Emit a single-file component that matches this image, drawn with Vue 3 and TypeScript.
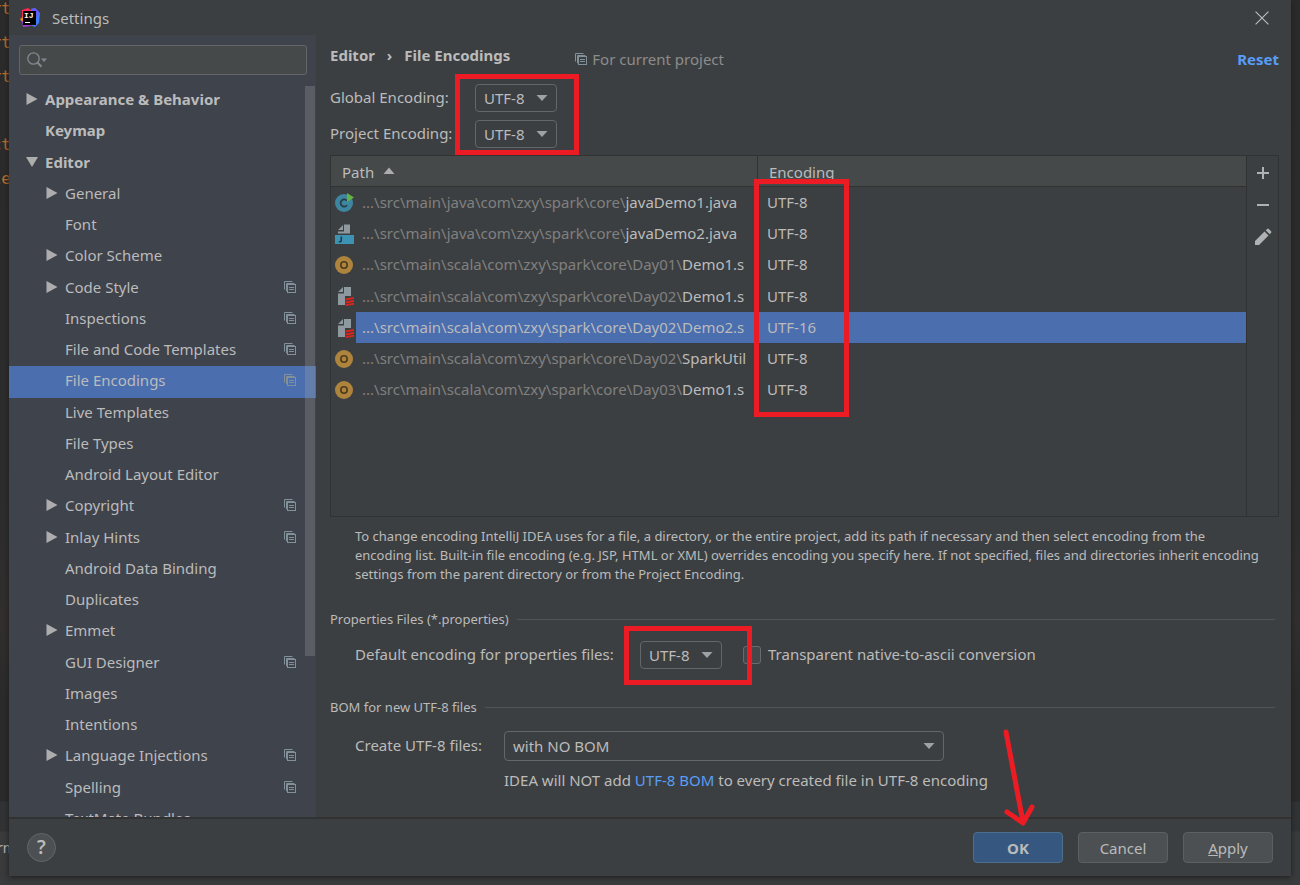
<script setup lang="ts">
import { ref } from 'vue'

interface TreeItem {
  label: string
  level: 0 | 1
  arrow?: 'right' | 'down'
  project?: boolean
}

type IconKind = 'class' | 'java' | 'object' | 'scala'

interface FileRow {
  icon: IconKind
  dir: string
  name: string
  encoding: string
}

const tree: TreeItem[] = [
  { label: 'Appearance & Behavior', level: 0, arrow: 'right' },
  { label: 'Keymap', level: 0 },
  { label: 'Editor', level: 0, arrow: 'down' },
  { label: 'General', level: 1, arrow: 'right' },
  { label: 'Font', level: 1 },
  { label: 'Color Scheme', level: 1, arrow: 'right' },
  { label: 'Code Style', level: 1, arrow: 'right', project: true },
  { label: 'Inspections', level: 1, project: true },
  { label: 'File and Code Templates', level: 1, project: true },
  { label: 'File Encodings', level: 1, project: true },
  { label: 'Live Templates', level: 1 },
  { label: 'File Types', level: 1 },
  { label: 'Android Layout Editor', level: 1 },
  { label: 'Copyright', level: 1, arrow: 'right', project: true },
  { label: 'Inlay Hints', level: 1, arrow: 'right', project: true },
  { label: 'Android Data Binding', level: 1 },
  { label: 'Duplicates', level: 1 },
  { label: 'Emmet', level: 1, arrow: 'right' },
  { label: 'GUI Designer', level: 1, project: true },
  { label: 'Images', level: 1 },
  { label: 'Intentions', level: 1 },
  { label: 'Language Injections', level: 1, arrow: 'right', project: true },
  { label: 'Spelling', level: 1, project: true },
  { label: 'TextMate Bundles', level: 1 },
]

const files: FileRow[] = [
  { icon: 'class', dir: '...\\src\\main\\java\\com\\zxy\\spark\\core\\', name: 'javaDemo1.java', encoding: 'UTF-8' },
  { icon: 'java', dir: '...\\src\\main\\java\\com\\zxy\\spark\\core\\', name: 'javaDemo2.java', encoding: 'UTF-8' },
  { icon: 'object', dir: '...\\src\\main\\scala\\com\\zxy\\spark\\core\\Day01\\', name: 'Demo1.s', encoding: 'UTF-8' },
  { icon: 'scala', dir: '...\\src\\main\\scala\\com\\zxy\\spark\\core\\Day02\\', name: 'Demo1.s', encoding: 'UTF-8' },
  { icon: 'scala', dir: '...\\src\\main\\scala\\com\\zxy\\spark\\core\\Day02\\', name: 'Demo2.s', encoding: 'UTF-16' },
  { icon: 'object', dir: '...\\src\\main\\scala\\com\\zxy\\spark\\core\\Day02\\', name: 'SparkUtil', encoding: 'UTF-8' },
  { icon: 'object', dir: '...\\src\\main\\scala\\com\\zxy\\spark\\core\\Day03\\', name: 'Demo1.s', encoding: 'UTF-8' },
]

const current = ref('File Encodings')
const selectedRow = ref(4)
const query = ref('')
const globalEncoding = ref('UTF-8')
const projectEncoding = ref('UTF-8')
const propertiesEncoding = ref('UTF-8')
const bom = ref('with NO BOM')
const nativeToAscii = ref(false)
</script>

<template>
  <div class="desktop">
    <div class="code-behind" aria-hidden="true">
      <div>rt</div>
      <div>rt</div>
      <div>rt</div>
      <div>&nbsp;</div>
      <div>ct</div>
      <div>le</div>
    </div>
    <div class="tool-behind" aria-hidden="true">rm</div>

    <section class="dialog" aria-label="Settings">
      <header class="titlebar">
        <svg class="logo" viewBox="0 0 20 20" aria-hidden="true">
          <path d="M2 2 L8 0 L12 3 L9 10 L2 9 Z" fill="#fe2857" />
          <path d="M0 11 L4 8 L6 14 L2 14 Z" fill="#fc801d" />
          <path d="M11 1 L15 0 L20 5 L19 15 L15 19 L10 17 Z" fill="#3d7bf7" />
          <path d="M11 1 L15 0 L19 4 L17 9 L12 5 Z" fill="#6b57ff" />
          <path d="M2 13 L9 14 L11 18 L3 19 Z" fill="#a23be0" />
          <rect x="3" y="3" width="13" height="14" fill="#000" />
          <text x="4" y="10" font-size="8" font-weight="700" font-family="Liberation Mono, monospace" fill="#fff">IJ</text>
          <rect x="5" y="14" width="5" height="1" fill="#fff" />
        </svg>
        <h1>Settings</h1>
        <button class="close" type="button" aria-label="Close">
          <svg viewBox="0 0 12 12"><path d="M0.5 0.5 L11.5 11.5 M11.5 0.5 L0.5 11.5" /></svg>
        </button>
      </header>

      <div class="body">
        <aside class="sidebar">
          <div class="search">
            <svg viewBox="0 0 20 16" aria-hidden="true">
              <circle cx="6.5" cy="6.5" r="5.7" fill="none" stroke="#7f898e" stroke-width="1.3" />
              <path d="M10.5 10.5 L14.5 14.7" stroke="#7f898e" stroke-width="2" />
              <path d="M14 6.5 h6 l-3 3.5 z" fill="#7f898e" />
            </svg>
            <input v-model="query" type="text" aria-label="Search settings" />
          </div>
          <div class="tree-view">
            <ul class="tree">
              <li
                v-for="item in tree"
                :key="item.label"
                :class="{ child: item.level === 1, current: item.label === current }"
                @click="current = item.label"
              >
                <span class="twisty">
                  <svg v-if="item.arrow === 'right'" viewBox="0 0 12 12"><path d="M0.5 0 L11.5 6 L0.5 12 Z" /></svg>
                  <svg v-else-if="item.arrow === 'down'" viewBox="0 0 12 12"><path d="M0 1 H12 L6 11 Z" /></svg>
                </span>
                <span class="label">{{ item.label }}</span>
                <svg v-if="item.project" class="project-icon" viewBox="0 0 12 12" aria-hidden="true">
                  <path d="M0.5 8.5 V0.5 H8.5 M3 10 H2.5 V2.5 H10.5" />
                  <rect x="3.5" y="3.5" width="8" height="8" />
                  <path d="M5 6.5 H10 M5 8.5 H10" />
                </svg>
              </li>
            </ul>
            <div class="scrollbar"></div>
          </div>
        </aside>

        <main class="content">
          <div class="heading">
            <h2>Editor <span class="sep">›</span> File Encodings</h2>
            <p class="scope">
              <svg class="project-icon" viewBox="0 0 12 12" aria-hidden="true">
                <path d="M0.5 8.5 V0.5 H8.5 M3 10 H2.5 V2.5 H10.5" />
                <rect x="3.5" y="3.5" width="8" height="8" />
                <path d="M5 6.5 H10 M5 8.5 H10" />
              </svg>
              For current project
            </p>
            <a class="reset" href="#">Reset</a>
          </div>

          <div class="encodings">
            <label for="global">Global Encoding:</label>
            <div class="combo">
              <select id="global" v-model="globalEncoding"><option>UTF-8</option><option>UTF-16</option></select>
              <svg viewBox="0 0 12 8"><path d="M0.5 1 H11.5 L6 7 Z" /></svg>
            </div>
            <label for="project">Project Encoding:</label>
            <div class="combo">
              <select id="project" v-model="projectEncoding"><option>UTF-8</option><option>UTF-16</option></select>
              <svg viewBox="0 0 12 8"><path d="M0.5 1 H11.5 L6 7 Z" /></svg>
            </div>
            <div class="mark mark-top"></div>
          </div>

          <div class="panel">
            <div class="grid-wrap">
              <table>
                <colgroup><col class="col-path" /><col /></colgroup>
                <thead>
                  <tr>
                    <th scope="col">
                      Path
                      <svg class="sort" viewBox="0 0 12 7" aria-hidden="true"><path d="M0.5 7 L6 0.5 L11.5 7 Z" /></svg>
                    </th>
                    <th scope="col">Encoding</th>
                  </tr>
                </thead>
                <tbody>
                  <tr
                    v-for="(file, i) in files"
                    :key="i"
                    :class="{ selected: i === selectedRow }"
                    @click="selectedRow = i"
                  >
                    <td>
                      <div class="path-cell">
                        <svg class="file-icon" viewBox="0 0 20 20" aria-hidden="true">
                          <template v-if="file.icon === 'class'">
                            <circle cx="9" cy="10" r="9" fill="#3e86a0" />
                            <path d="M12 7.8 A3.6 3.6 0 1 0 12 12.2" fill="none" stroke="#263c46" stroke-width="1.7" />
                            <path d="M12 0 L19 4.5 L12 9 Z" fill="#62b543" />
                          </template>
                          <template v-else-if="file.icon === 'java'">
                            <path d="M3 6 L8 1 V6 Z M9 0.5 H15 V9.5 H3 V7.5 H9 Z" fill="#8e999f" />
                            <rect x="0" y="11" width="19" height="9" fill="#3c93b3" />
                            <path d="M6.3 12.5 V16.3 Q6.3 18 3.8 17.8" fill="none" stroke="#203a45" stroke-width="1.6" />
                          </template>
                          <template v-else-if="file.icon === 'object'">
                            <circle cx="9" cy="10" r="9" fill="#ae843d" />
                            <circle cx="9" cy="10" r="3.2" fill="none" stroke="#4d3b20" stroke-width="1.6" />
                          </template>
                          <template v-else>
                            <path d="M3 6 L8 1 V6 Z M9 1 H16 V10 H10 V19 H3 V7.5 H9 Z" fill="#8e999f" />
                            <path d="M10.5 12.5 L19 11 V13 L10.5 14.5 Z M10.5 15.5 L19 14 V16 L10.5 17.5 Z M10.5 18.2 L19 16.8 V18.8 L10.5 20 Z" fill="#d9251d" />
                          </template>
                        </svg>
                        <span class="path"><span class="dir">{{ file.dir }}</span>{{ file.name }}</span>
                      </div>
                    </td>
                    <td>{{ file.encoding }}</td>
                  </tr>
                </tbody>
              </table>
              <div class="mark mark-table"></div>
            </div>
            <div class="tools">
              <button type="button" aria-label="Add">
                <svg viewBox="0 0 18 18"><path d="M9 3 V15 M3 9 H15" stroke="#afb1b3" stroke-width="2" /></svg>
              </button>
              <button type="button" aria-label="Remove">
                <svg viewBox="0 0 18 18"><path d="M3 9 H15" stroke="#afb1b3" stroke-width="2" /></svg>
              </button>
              <button type="button" aria-label="Edit">
                <svg viewBox="0 0 18 18">
                  <path d="M1 17 V13 L10.5 3.5 L14.5 7.5 L5 17 Z M11.7 2.3 L13.2 0.9 Q14 0.3 14.8 0.9 L17.1 3.2 Q17.7 4 17.1 4.8 L15.7 6.3 Z" fill="#afb1b3" />
                </svg>
              </button>
            </div>
          </div>

          <p class="note">
            To change encoding IntelliJ IDEA uses for a file, a directory, or the entire project, add its path if
            necessary and then select encoding from the encoding list. Built-in file encoding (e.g. JSP, HTML or XML)
            overrides encoding you specify here. If not specified, files and directories inherit encoding settings from
            the parent directory or from the Project Encoding.
          </p>

          <h3 class="group">Properties Files (*.properties)</h3>
          <div class="properties">
            <label class="props-label" for="props">Default encoding for properties files:</label>
            <div class="combo">
              <select id="props" v-model="propertiesEncoding"><option>UTF-8</option><option>UTF-16</option></select>
              <svg viewBox="0 0 12 8"><path d="M0.5 1 H11.5 L6 7 Z" /></svg>
              <div class="mark mark-props"></div>
            </div>
            <input id="ascii" v-model="nativeToAscii" type="checkbox" />
            <label for="ascii">Transparent native-to-ascii conversion</label>
          </div>

          <h3 class="group">BOM for new UTF-8 files</h3>
          <div class="bom">
            <label for="bom">Create UTF-8 files:</label>
            <div class="combo wide">
              <select id="bom" v-model="bom"><option>with NO BOM</option><option>with BOM</option></select>
              <svg viewBox="0 0 12 8"><path d="M0.5 1 H11.5 L6 7 Z" /></svg>
            </div>
            <p>IDEA will NOT add <a href="#">UTF-8 BOM</a> to every created file in UTF-8 encoding</p>
          </div>
        </main>
      </div>

      <footer class="footer">
        <button class="help" type="button" aria-label="Help">?</button>
        <div class="actions">
          <button class="btn primary" type="button">OK</button>
          <button class="btn" type="button">Cancel</button>
          <button class="btn" type="button"><u>A</u>pply</button>
          <svg class="arrow" viewBox="0 0 34 100" aria-hidden="true">
            <path d="M5 4 L22 94 M6 84 L22 95 L31 79" />
          </svg>
        </div>
      </footer>
    </section>
  </div>
</template>

<style>
html,
body {
  background: #2b2b2b;
}
</style>

<style scoped>
* {
  box-sizing: border-box;
}

.desktop {
  position: relative;
  display: flex;
  min-height: 100vh;
  padding: 0 9px 9px;
  overflow: hidden;
  background: linear-gradient(#2b2b2b 0, #2d2d2d 500px, #322f2e 620px, #2b2b2b 700px, #2b2b2b 801px, #313335 802px, #313335 831px, #3a3b3c 832px);
  font-family: 'Noto Sans', 'Open Sans', sans-serif;
  font-size: 15px;
  line-height: 22px;
  color: #bbbbbb;
}

h1,
h2,
h3,
p,
ul {
  margin: 0;
  padding: 0;
  font-size: inherit;
  font-weight: 400;
}

button,
select,
input {
  margin: 0;
  font: inherit;
  color: inherit;
}

a {
  color: #589df6;
  text-decoration: none;
}

.code-behind {
  position: absolute;
  top: -8px;
  left: 0;
  display: flex;
  flex-direction: column;
  align-items: flex-end;
  width: 11px;
  font: 16px/34px 'DejaVu Sans Mono', monospace;
  color: #c07030;
}

.tool-behind {
  position: absolute;
  bottom: 26px;
  left: -3px;
  font-size: 14px;
}

.dialog {
  position: relative;
  display: flex;
  flex: 1;
  flex-direction: column;
  min-width: 0;
  background: #3c3f41;
  box-shadow: 0 1px 6px #1c1c1c;
}

.titlebar {
  display: flex;
  flex: none;
  gap: 12px;
  align-items: center;
  height: 35px;
  padding: 0 22px 0 11px;
}

.logo {
  width: 20px;
  height: 20px;
}

.close {
  width: 14px;
  height: 14px;
  margin-left: auto;
  padding: 0;
  background: none;
  border: 0;
}

.close svg {
  display: block;
  width: 14px;
  height: 14px;
  fill: none;
  stroke: #bbbbbb;
}

.body {
  display: flex;
  flex: 1;
  min-height: 0;
}

.sidebar {
  display: flex;
  flex: none;
  flex-direction: column;
  width: 307px;
  background: #3f434c;
}

.search {
  display: flex;
  flex: none;
  align-items: center;
  height: 30px;
  margin: 10px 9px 10px 10px;
  padding: 0 8px 0 7px;
  background: #45494a;
  border: 1px solid #646769;
  border-radius: 3px;
}

.search svg {
  flex: none;
  width: 20px;
  height: 16px;
}

.search input {
  flex: 1;
  min-width: 0;
  background: none;
  border: 0;
  outline: 0;
}

.tree-view {
  position: relative;
  flex: 1 1 0;
  min-height: 0;
  overflow: hidden;
}

.tree {
  list-style: none;
}

.tree li {
  display: flex;
  align-items: center;
  height: 31px;
  padding: 0 20px 4px 17px;
  font-weight: 700;
}

.tree li:nth-child(4n + 2) {
  height: 32px;
}

.tree li.child {
  padding-left: 37px;
  font-weight: 400;
}

.tree li.current {
  background: #4b6eaf;
}

.twisty {
  flex: none;
  width: 19px;
}

.twisty svg {
  display: block;
  width: 12px;
  height: 12px;
  fill: #adadad;
}

.label {
  flex: 1;
  white-space: nowrap;
}

.project-icon {
  flex: none;
  width: 12px;
  height: 12px;
  fill: none;
  stroke: #82909a;
}

.scrollbar {
  position: absolute;
  top: 1px;
  right: 1px;
  width: 10px;
  height: 570px;
  background: rgba(166, 166, 166, 0.27);
}

.content {
  display: flex;
  flex: 1;
  flex-direction: column;
  min-width: 0;
  padding: 9px 12px 26px 14px;
}

.heading {
  display: flex;
  align-items: flex-start;
  height: 40px;
}

.heading h2 {
  font-weight: 700;
}

.sep {
  margin: 0 8px;
}

.scope {
  display: flex;
  gap: 5px;
  align-items: center;
  margin: 4px 0 0 65px;
  color: #8c8c8c;
}

.reset {
  margin: 4px 0 0 auto;
  font-weight: 700;
}

.encodings {
  position: relative;
  display: grid;
  grid-template-columns: 145px max-content;
  gap: 8px 0;
  align-items: center;
  margin-bottom: 7px;
}

.encodings label,
.properties label,
.bom label {
  padding-bottom: 2px;
}

.combo {
  position: relative;
  display: grid;
  align-items: center;
  width: 82px;
  height: 28px;
}

.combo select {
  grid-area: 1 / 1;
  width: 100%;
  height: 100%;
  padding: 0 24px 0 8px;
  appearance: none;
  background: #3c3f41;
  border: 1px solid #646769;
  border-radius: 4px;
  outline: 0;
}

.combo svg {
  grid-area: 1 / 1;
  justify-self: end;
  width: 12px;
  height: 8px;
  margin-right: 9px;
  pointer-events: none;
  fill: #9fa1a4;
}

.combo.wide {
  width: 440px;
  height: 30px;
}

.mark {
  position: absolute;
  z-index: 2;
  pointer-events: none;
  border: 5px solid #ed1c24;
}

.mark-top {
  top: -10px;
  left: 125px;
  width: 124px;
  height: 81px;
}

.mark-table {
  top: 23px;
  left: 423px;
  width: 95px;
  height: 238px;
}

.mark-props {
  top: -15px;
  left: -16px;
  width: 128px;
  height: 59px;
}

.panel {
  display: flex;
  flex: 1 0 262px;
  border: 1px solid #323232;
}

.grid-wrap {
  position: relative;
  flex: 1;
  min-width: 0;
}

table {
  width: 100%;
  table-layout: fixed;
  border-spacing: 0;
}

.col-path {
  width: 426px;
}

th {
  height: 31px;
  padding: 2px 11px 0;
  font-weight: 400;
  text-align: left;
  background: #45494a;
  border-bottom: 1px solid #323232;
}

th + th {
  border-left: 1px solid #323232;
}

.sort {
  width: 12px;
  height: 7px;
  margin: 0 0 4px 5px;
  fill: #adadad;
}

td {
  height: 31px;
  padding: 0;
  line-height: 31px;
  white-space: nowrap;
}

td + td {
  padding-left: 10px;
}

tr:nth-child(4n) td {
  height: 32px;
}

.path-cell {
  display: flex;
  gap: 1px;
  align-items: center;
  padding-left: 4px;
}

.file-icon {
  flex: none;
  width: 20px;
  height: 20px;
}

.path {
  flex: 1;
  min-width: 0;
  padding-left: 6px;
  overflow: hidden;
}

.dir {
  color: #808080;
}

.selected .dir {
  color: inherit;
}

.selected .path,
.selected td + td {
  background: #4b6eaf;
}

.tools {
  display: flex;
  flex: none;
  flex-direction: column;
  align-items: center;
  width: 32px;
  padding-top: 1px;
  border-left: 1px solid #323232;
}

.tools button {
  display: grid;
  place-items: center;
  width: 30px;
  height: 32px;
  padding: 0;
  background: none;
  border: 0;
}

.tools svg {
  width: 18px;
  height: 18px;
}

.note {
  margin: 10px 19px 26px 25px;
  font-size: 13px;
  line-height: 19px;
}

.group {
  display: flex;
  gap: 8px;
  align-items: center;
  margin-right: 4px;
  font-size: 13px;
  line-height: 19px;
}

.group::after {
  flex: 1;
  height: 1px;
  content: '';
  background: #515456;
}

.properties {
  display: flex;
  align-items: center;
  margin: 12px 0 29px 25px;
}

.props-label {
  width: 285px;
}

.properties .combo {
  margin-right: 21px;
}

.properties input {
  width: 18px;
  height: 18px;
  margin-right: 7px;
  appearance: none;
  background: #43494a;
  border: 1px solid #6b6b6b;
  border-radius: 3px;
}

.bom {
  display: grid;
  grid-template-columns: 149px minmax(0, 1fr);
  gap: 8px 0;
  align-items: center;
  margin: 14px 0 0 25px;
}

.bom p {
  grid-column: 2;
}

.footer {
  display: flex;
  flex: none;
  align-items: center;
  justify-content: space-between;
  height: 59px;
  padding: 0 18px;
  border-top: 2px solid #323232;
}

.help {
  width: 29px;
  height: 29px;
  padding: 0;
  font-size: 19px;
  font-weight: 600;
  line-height: 27px;
  background: #4c5052;
  border: 1px solid #646769;
  border-radius: 50%;
}

.actions {
  position: relative;
  display: flex;
  gap: 15px;
}

.btn {
  width: 90px;
  height: 31px;
  padding: 0;
  background: #4c5052;
  border: 1px solid #5e6060;
  border-radius: 4px;
}

.btn.primary {
  font-weight: 700;
  background: #365880;
  border-color: #4c708c;
}

.arrow {
  position: absolute;
  bottom: 35px;
  left: 28px;
  width: 34px;
  height: 100px;
  pointer-events: none;
  fill: none;
  stroke: #ed1c24;
  stroke-width: 5px;
  stroke-linecap: round;
  stroke-linejoin: round;
}
</style>
